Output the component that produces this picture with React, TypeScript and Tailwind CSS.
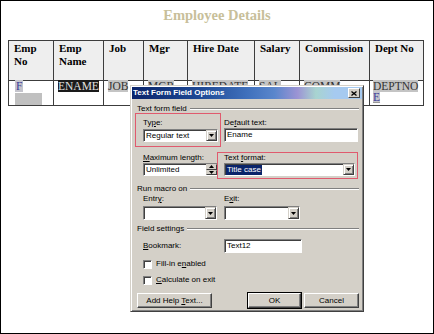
import React from "react";

const SANS = "font-['Liberation_Sans',Arial,sans-serif]";
const SERIF = "font-['Liberation_Serif','Times_New_Roman',serif]";

function Arrow() {
  return (
    <svg width="5" height="3" viewBox="0 0 5 3">
      <path d="M0 0h5L2.5 3z" fill="#000" />
    </svg>
  );
}

function DropBtn() {
  return (
    <div className="flex h-full w-[11px] items-center justify-center border border-t-[#d4d0c8] border-l-[#d4d0c8] border-r-[#404040] border-b-[#404040] bg-[#d4d0c8] shadow-[inset_1px_1px_#fff,inset_-1px_-1px_#808080]">
      <Arrow />
    </div>
  );
}

function SpinBtn() {
  return (
    <div className="flex h-full w-[11px] flex-col">
      <div className="flex flex-1 items-center justify-center border border-t-[#d4d0c8] border-l-[#d4d0c8] border-r-[#404040] border-b-[#404040] bg-[#d4d0c8]">
        <svg width="5" height="3" viewBox="0 0 5 3">
          <path d="M0 3h5L2.5 0z" fill="#000" />
        </svg>
      </div>
      <div className="flex flex-1 items-center justify-center border border-t-[#d4d0c8] border-l-[#d4d0c8] border-r-[#404040] border-b-[#404040] bg-[#d4d0c8]">
        <Arrow />
      </div>
    </div>
  );
}

function Sunken({ className, children }: { className: string; children?: React.ReactNode }) {
  return (
    <div
      className={
        "flex items-center border border-t-[#808080] border-l-[#808080] border-r-white border-b-white bg-white shadow-[inset_1px_1px_#404040] " +
        className
      }
    >
      {children}
    </div>
  );
}

function Heading({ children }: { children: React.ReactNode }) {
  return (
    <div className="flex h-[9px] items-center">
      <span className="pl-[2px] pr-[3px] text-[8px] leading-[9px] whitespace-nowrap">{children}</span>
      <div className="flex-1 border-t border-t-[#808080] border-b border-b-white" />
    </div>
  );
}

function Btn({ className, children }: { className: string; children: React.ReactNode }) {
  return (
    <div
      className={
        "flex h-[15px] items-center justify-center border border-t-white border-l-white border-r-[#404040] border-b-[#404040] bg-[#d4d0c8] text-[8px] shadow-[inset_-1px_-1px_#808080] " +
        className
      }
    >
      {children}
    </div>
  );
}

function Check() {
  return <div className="h-[9px] w-[9px] border border-t-[#808080] border-l-[#808080] border-r-white border-b-white bg-white shadow-[inset_1px_1px_#404040]" />;
}

function Dialog() {
  return (
    <div
      className={
        "absolute left-[129px] top-[84px] h-[227px] w-[234px] border border-t-[#d4d0c8] border-l-[#d4d0c8] border-r-[#404040] border-b-[#404040] bg-[#d4d0c8] text-black shadow-[inset_1px_1px_#fff,inset_-1px_-1px_#808080] " +
        SANS
      }
    >
      {/* title bar */}
      <div className="mx-[1px] mt-[1px] flex h-[12px] items-center justify-between bg-[linear-gradient(90deg,#0a246a_0%,#1f4a96_30%,#3f70bc_50%,#5a86cc_62%,#9c94d4_72%,#a8d4d0_80%,#a6caf0_88%,#a6caf0_100%)] pl-[1px] pr-[2px]">
        <span className="text-[8px] font-bold leading-[10px] text-white whitespace-nowrap">Text Form Field Options</span>
        <div className="flex h-[10px] w-[12px] items-center justify-center border border-t-white border-l-white border-r-[#404040] border-b-[#404040] bg-[#d4d0c8]">
          <svg width="6" height="5" viewBox="0 0 6 5">
            <path d="M0.5 0.5L5.5 4.5M5.5 0.5L0.5 4.5" stroke="#000" strokeWidth="1.3" />
          </svg>
        </div>
      </div>

      <div className="pl-[4px] pr-[4px]">
        <div className="mt-[5px]">
          <Heading>Text form field</Heading>
        </div>

        {/* row 1 */}
        <div className="flex">
          <div className="h-[34px] w-[86px] border border-[#e05a6e] pl-[7px] pt-[4px]">
            <div className="text-[8px] leading-[10px]">
              Ty<span className="underline">p</span>e:
            </div>
            <Sunken className="mt-[1px] h-[13px] w-[75px] justify-between">
              <span className="pl-[2px] text-[8px] leading-[10px]">Regular text</span>
              <DropBtn />
            </Sunken>
          </div>
          <div className="ml-[3px] w-[134px] pt-[5px]">
            <div className="text-[8px] leading-[10px]">
              De<span className="underline">f</span>ault text:
            </div>
            <Sunken className="h-[14px] w-[134px]">
              <span className="pl-[2px] text-[8px] leading-[10px]">Ename</span>
            </Sunken>
          </div>
        </div>

        {/* row 2 */}
        <div className="mt-[5px] flex">
          <div className="w-[82px] pl-[8px] pt-[1px]">
            <div className="text-[8px] leading-[10px]">
              <span className="underline">M</span>aximum length:
            </div>
            <Sunken className="h-[13px] w-[75px] justify-between">
              <span className="pl-[2px] text-[8px] leading-[10px]">Unlimited</span>
              <SpinBtn />
            </Sunken>
          </div>
          <div className="h-[27px] w-[141px] border border-[#e05a6e] pl-[6px]">
            <div className="text-[8px] leading-[10px]">
              Text <span className="underline">f</span>ormat:
            </div>
            <Sunken className="h-[13px] w-[131px] justify-between">
              <span className="ml-[1px] bg-[#0a246a] px-[1px] text-[8px] leading-[10px] text-white">Title case</span>
              <DropBtn />
            </Sunken>
          </div>
        </div>

        <div className="mt-[5px]">
          <Heading>Run macro on</Heading>
        </div>

        <div className="mt-[1px] flex">
          <div className="w-[89px] pl-[8px]">
            <div className="text-[8px] leading-[10px]">
              Entr<span className="underline">y</span>:
            </div>
            <Sunken className="mt-[2px] h-[14px] w-[74px] justify-end">
              <DropBtn />
            </Sunken>
          </div>
          <div>
            <div className="text-[8px] leading-[10px]">
              E<span className="underline">x</span>it:
            </div>
            <Sunken className="mt-[2px] h-[14px] w-[76px] justify-end">
              <DropBtn />
            </Sunken>
          </div>
        </div>

        <div className="mt-[4px]">
          <Heading>Field settings</Heading>
        </div>

        <div className="mt-[6px] flex items-center">
          <div className="w-[89px] pl-[8px] text-[8px] leading-[10px]">
            <span className="underline">B</span>ookmark:
          </div>
          <Sunken className="h-[14px] w-[78px]">
            <span className="pl-[2px] text-[8px] leading-[10px]">Text12</span>
          </Sunken>
        </div>

        <div className="mt-[6px] flex items-center pl-[8px]">
          <Check />
          <span className="ml-[4px] text-[8px] leading-[10px]">
            Fill-in e<span className="underline">n</span>abled
          </span>
        </div>
        <div className="mt-[6px] flex items-center pl-[8px]">
          <Check />
          <span className="ml-[4px] text-[8px] leading-[10px]">
            <span className="underline">C</span>alculate on exit
          </span>
        </div>

        <div className="mt-[8px] flex">
          <Btn className="ml-[2px] w-[75px]">
            <span>
              Add Help <span className="underline">T</span>ext...
            </span>
          </Btn>
          <Btn className="ml-[36px] w-[53px] outline outline-1 outline-black">OK</Btn>
          <Btn className="ml-[3px] w-[55px]">Cancel</Btn>
        </div>
      </div>
    </div>
  );
}

export default function App() {
  const headers = [
    ["Emp", "No"],
    ["Emp", "Name"],
    ["Job"],
    ["Mgr"],
    ["Hire Date"],
    ["Salary"],
    ["Commission"],
    ["Dept No"],
  ];
  const widths = ["w-[45px]", "w-[50px]", "w-[40px]", "w-[44px]", "w-[67px]", "w-[45px]", "w-[70px]", "w-[54px]"];
  return (
    <div className="relative h-[334px] w-[434px] overflow-hidden border border-black bg-white pt-[6px]">
      <div className={"text-center text-[14.5px] font-bold leading-[16px] text-[#c8bf9a] " + SERIF}>Employee Details</div>

      <div className="mt-[17px] pl-[7px]">
        <table className={"w-[416px] table-fixed border-collapse border border-[#3c3c3c] text-black " + SERIF}>
          <colgroup>
            {widths.map((w, i) => (
              <col key={i} className={w} />
            ))}
          </colgroup>
          <tbody>
            <tr className="h-[40px] bg-[#eeeeee]">
              {headers.map((h, i) => (
                <td key={i} className="border border-[#3c3c3c] pl-[5px] pt-[1px] align-top text-[11px] font-bold leading-[13px]">
                  {h.map((l, j) => (
                    <div key={j} className="whitespace-nowrap">{l}</div>
                  ))}
                </td>
              ))}
            </tr>
            <tr className="h-[25px] bg-white text-[11.5px] leading-[11px]">
              <td className="border border-[#3c3c3c] pl-[6px] align-top">
                <span className="bg-[#c4c4cc] px-[1px] text-[#3b3b98]">F</span>
                <div className="mt-[1px] h-[12px] w-[27px] bg-[#c0c0c0]" />
              </td>
              <td className="border border-[#3c3c3c] pl-[4px] align-top">
                <span className="bg-[#1a1a1a] text-[#e0e0e0]">ENAME</span>
              </td>
              <td className="border border-[#3c3c3c] pl-[4px] align-top">
                <span className="bg-[#c4c4c4] text-[#333]">JOB</span>
              </td>
              <td className="border border-[#3c3c3c] pl-[4px] align-top">
                <span className="bg-[#c4c4c4] text-[#333]">MGR</span>
              </td>
              <td className="border border-[#3c3c3c] pl-[4px] align-top">
                <span className="bg-[#c4c4c4] text-[#333]">HIREDATE</span>
              </td>
              <td className="border border-[#3c3c3c] pl-[4px] align-top">
                <span className="bg-[#c4c4c4] text-[#333]">SAL</span>
              </td>
              <td className="border border-[#3c3c3c] pl-[4px] align-top">
                <span className="bg-[#c4c4c4] text-[#333]">COMM</span>
              </td>
              <td className="border border-[#3c3c3c] pl-[3px] align-top">
                <div>
                  <span className="bg-[#c4c4c4] text-[#333]">DEPTNO</span>
                </div>
                <div>
                  <span className="bg-[#c4c4cc] text-[#3b3b98] underline decoration-[#999]">E</span>
                </div>
              </td>
            </tr>
          </tbody>
        </table>
      </div>

      <Dialog />
    </div>
  );
}
